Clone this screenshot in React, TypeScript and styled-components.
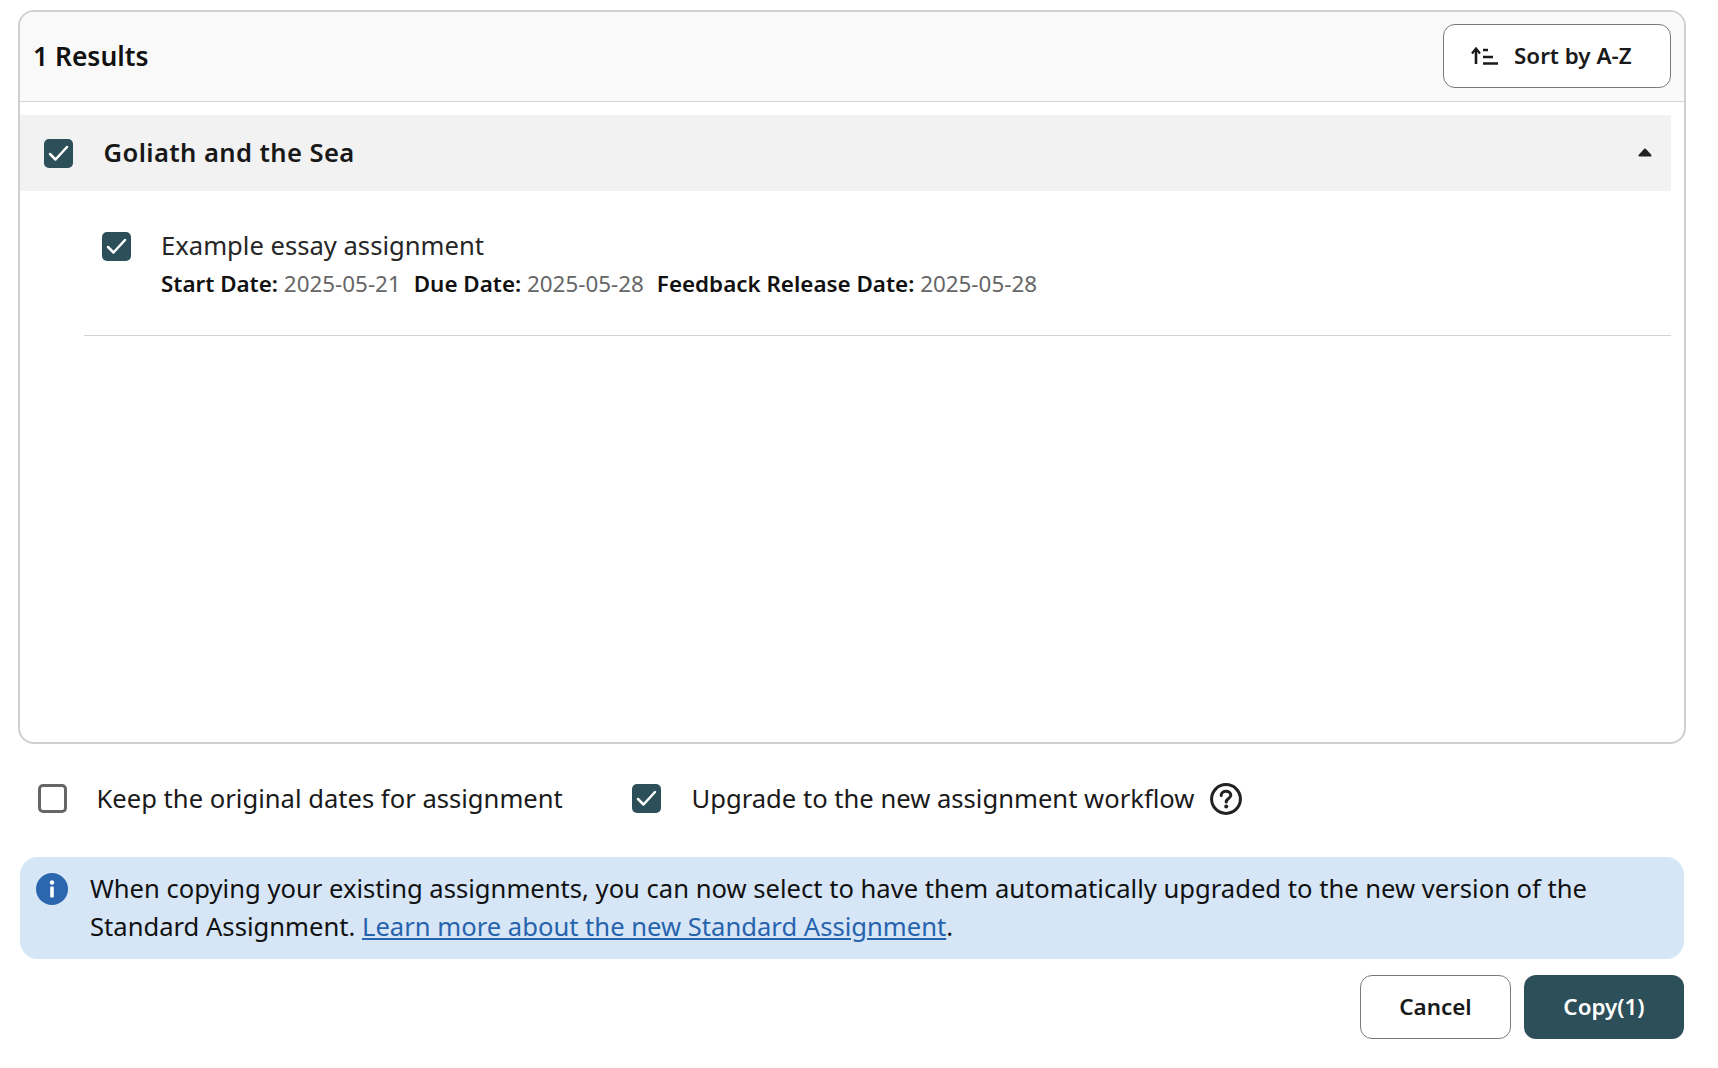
import React from "react";
import styled, { createGlobalStyle } from "styled-components";

const GlobalStyle = createGlobalStyle`
  html, body {
    margin: 0;
    padding: 0;
    background: #fff;
  }
  body {
    font-family: "Noto Sans", "Open Sans", sans-serif;
    color: #1a1a1a;
  }
  * {
    box-sizing: border-box;
  }
`;

const Page = styled.div`
  width: 1718px;
  height: 1068px;
  padding: 10px 32px 0 18px;
  overflow: hidden;
`;

const ResultsCard = styled.div`
  height: 734px;
  border: 2px solid #cfcfcf;
  border-radius: 16px;
  overflow: hidden;
`;

const ResultsHeader = styled.div`
  height: 90px;
  display: flex;
  align-items: center;
  justify-content: space-between;
  padding: 0 13px 1.5px 13px;
  background: #f9f9f9;
  border-bottom: 1.5px solid #d4d4d4;
`;

const ResultsCount = styled.div`
  font-size: 26.4px;
  font-weight: 600;
  color: #111;
`;

const SortButton = styled.button`
  width: 228px;
  height: 64px;
  display: flex;
  align-items: center;
  gap: 15px;
  padding: 0 0 0 27px;
  background: #fff;
  border: 1.5px solid #7a7a7a;
  border-radius: 12px;
  font: 600 22.4px "Noto Sans", sans-serif;
  color: #1a1a1a;
`;

const List = styled.div`
  padding: 13px 13px 0 0;
`;

const GroupRow = styled.div`
  height: 76px;
  display: flex;
  align-items: center;
  gap: 31px;
  padding: 0 19px 0 24px;
  background: #f2f2f2;
`;

const GroupTitle = styled.div`
  flex: 1;
  padding-bottom: 2px;
  font-size: 25.6px;
  font-weight: 600;
  letter-spacing: 0.4px;
  color: #181818;
`;

const AssignmentRow = styled.div`
  display: flex;
  gap: 31px;
  margin-left: 64px;
  padding: 40px 0 33.5px 18px;
  border-bottom: 1.5px solid #d4d4d4;
`;

const AssignmentBody = styled.div`
  display: flex;
  flex-direction: column;
  gap: 6px;
  margin-left: -0.5px;
`;

const AssignmentName = styled.div`
  font-size: 25.6px;
  line-height: 30px;
  color: #262626;
`;

const Dates = styled.div`
  display: flex;
  gap: 13px;
  font-size: 22.4px;
  line-height: 34px;
  color: #666;
`;

const DateLabel = styled.strong`
  font-weight: 600;
  color: #111;
`;

const OptionsRow = styled.div`
  display: flex;
  align-items: center;
  height: 113px;
  padding: 0 0 5px 20px;
`;

const Option = styled.label<{ $gap: number; $width?: number }>`
  display: flex;
  align-items: center;
  gap: ${({ $gap }) => $gap}px;
  width: ${({ $width }) => ($width ? `${$width}px` : "auto")};
  font-size: 25.6px;
  color: #1a1a1a;
`;

const Box = styled.span<{ $checked?: boolean }>`
  flex-shrink: 0;
  width: 28.5px;
  height: 29px;
  margin-top: 1px;
  display: flex;
  align-items: center;
  justify-content: center;
  border-radius: 5px;
  background: ${({ $checked }) => ($checked ? "#2c4f5a" : "#fff")};
  border: ${({ $checked }) => ($checked ? "none" : "3px solid #666")};
`;

const HelpIcon = styled.svg`
  width: 32px;
  height: 32px;
  margin: 2px 0 0 16px;
  flex-shrink: 0;
`;

const InfoBanner = styled.div`
  height: 102px;
  display: flex;
  gap: 22px;
  margin: 0 2px;
  padding: 13px 20px 0 16px;
  background: #d6e6f7;
  border-radius: 18px;
`;

const InfoIcon = styled.svg`
  width: 32px;
  height: 32px;
  margin-top: 3px;
  flex-shrink: 0;
`;

const InfoText = styled.div`
  font-size: 25.6px;
  line-height: 38px;
  color: #111;
`;

const InfoLink = styled.a`
  color: #2763ad;
  text-decoration: underline;
`;

const Footer = styled.div`
  display: flex;
  justify-content: flex-end;
  gap: 13px;
  margin: 16px 2px 0 0;
`;

const FooterButton = styled.button<{ $primary?: boolean }>`
  width: ${({ $primary }) => ($primary ? "160px" : "151px")};
  height: 64px;
  padding: 0 0 2px;
  border-radius: 12px;
  font: 600 22.4px "Noto Sans", sans-serif;
  background: ${({ $primary }) => ($primary ? "#2c4f5a" : "#fff")};
  color: ${({ $primary }) => ($primary ? "#fff" : "#1a1a1a")};
  border: ${({ $primary }) => ($primary ? "none" : "1.5px solid #7a7a7a")};
`;

const Caret = styled.svg`
  width: 14px;
  height: 9px;
  margin-bottom: 1px;
  flex-shrink: 0;
`;

const Check = () => (
  <svg width="21" height="17" viewBox="0 0 21 17" fill="none">
    <path d="M2 9 L7.5 14.5 L19 2" stroke="#fff" strokeWidth="2.5" strokeLinecap="round" strokeLinejoin="round" />
  </svg>
);

const CheckBox = ({ checked }: { checked?: boolean }) => <Box $checked={checked}>{checked && <Check />}</Box>;

const SortIcon = () => (
  <svg width="28" height="18" viewBox="0 0 28 18" fill="none" stroke="#1a1a1a" strokeWidth="2.6">
    <path d="M5 17 V2" />
    <path d="M1 6.5 L5 1.5 L9 6.5" strokeWidth="2.2" />
    <path d="M12 3 H17" />
    <path d="M12 10 H22" />
    <path d="M12 16.5 H27" />
  </svg>
);

export default function App() {
  return (
    <Page>
      <GlobalStyle />
      <ResultsCard>
        <ResultsHeader>
          <ResultsCount>1 Results</ResultsCount>
          <SortButton>
            <SortIcon />
            Sort by A-Z
          </SortButton>
        </ResultsHeader>
        <List>
          <GroupRow>
            <CheckBox checked />
            <GroupTitle>Goliath and the Sea</GroupTitle>
            <Caret viewBox="0 0 14 9">
              <path d="M7 1.5 L12.5 7.5 H1.5 Z" fill="#222" stroke="#222" strokeWidth="2" strokeLinejoin="round" />
            </Caret>
          </GroupRow>
          <AssignmentRow>
            <CheckBox checked />
            <AssignmentBody>
              <AssignmentName>Example essay assignment</AssignmentName>
              <Dates>
                <span>
                  <DateLabel>Start Date:</DateLabel> 2025-05-21
                </span>
                <span>
                  <DateLabel>Due Date:</DateLabel> 2025-05-28
                </span>
                <span>
                  <DateLabel>Feedback Release Date:</DateLabel> 2025-05-28
                </span>
              </Dates>
            </AssignmentBody>
          </AssignmentRow>
        </List>
      </ResultsCard>
      <OptionsRow>
        <Option $gap={30} $width={594}>
          <CheckBox />
          Keep the original dates for assignment
        </Option>
        <Option $gap={31}>
          <CheckBox checked />
          Upgrade to the new assignment workflow
        </Option>
        <HelpIcon viewBox="0 0 32 32" fill="none">
          <circle cx="16" cy="16" r="14.4" stroke="#222" strokeWidth="3" />
          <path d="M11.2 12.5 C11.2 9.8 13.4 8.3 16 8.3 C18.7 8.3 20.8 10 20.8 12.3 C20.8 15.4 16.2 15.6 16.2 19" stroke="#222" strokeWidth="3" strokeLinecap="round" />
          <circle cx="16.2" cy="23.6" r="2" fill="#222" />
        </HelpIcon>
      </OptionsRow>
      <InfoBanner>
        <InfoIcon viewBox="0 0 32 32">
          <circle cx="16" cy="16" r="16" fill="#2b66ae" />
          <circle cx="16" cy="9.5" r="2.2" fill="#fff" />
          <rect x="14.2" y="13.5" width="3.6" height="11" rx="1" fill="#fff" />
        </InfoIcon>
        <InfoText>
          When copying your existing assignments, you can now select to have them automatically upgraded to the new version of the
          <br />
          Standard Assignment. <InfoLink href="#">Learn more about the new Standard Assignment</InfoLink>.
        </InfoText>
      </InfoBanner>
      <Footer>
        <FooterButton>Cancel</FooterButton>
        <FooterButton $primary>Copy(1)</FooterButton>
      </Footer>
    </Page>
  );
}
